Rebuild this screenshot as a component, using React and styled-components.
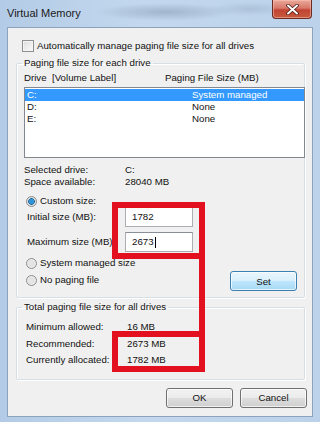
import React from 'react';
import styled, { createGlobalStyle } from 'styled-components';

const GlobalStyle = createGlobalStyle`
  html, body {
    margin: 0;
    padding: 0;
    background: #bcd3ec;
  }
  * {
    box-sizing: border-box;
  }
`;

const font = `"Liberation Sans", Arial, sans-serif`;

const Window = styled.div`
  position: relative;
  width: 320px;
  height: 422px;
  display: flex;
  flex-direction: column;
  overflow: hidden;
  font-family: ${font};
  font-size: 9.7px;
  color: #111;
  background: linear-gradient(90deg, #b3cbe6 0%, #c3d8ee 45%, #bcd2ea 100%);
`;

const TitleBar = styled.div`
  height: 27px;
  flex: none;
  display: flex;
  justify-content: space-between;
  align-items: flex-start;
  background:
    radial-gradient(ellipse 70px 9px at 165px 12px, rgba(120, 140, 165, 0.45), transparent),
    radial-gradient(ellipse 40px 7px at 250px 9px, rgba(140, 160, 185, 0.35), transparent);
`;

const Title = styled.span`
  padding: 7px 0 0 7px;
  font-size: 11px;
  line-height: 13px;
  color: #1a1a1a;
`;

const CloseButton = styled.div`
  width: 40px;
  height: 19px;
  margin-right: 8px;
  border: 1px solid #6b2a22;
  border-top: none;
  border-radius: 0 0 4px 4px;
  background: linear-gradient(180deg, #e9a999 0%, #d8786a 45%, #c24432 55%, #c65a3e 100%);
  box-shadow: inset 0 0 0 1px rgba(255, 200, 190, 0.5);
  display: flex;
  align-items: center;
  justify-content: center;
`;

const Client = styled.div`
  position: relative;
  flex: 1;
  margin: 0 7px;
  background: #f0f0f0;
  border: 1px solid #8da2bc;
  display: flex;
  flex-direction: column;
`;

const BottomFrame = styled.div`
  height: 5px;
  flex: none;
`;

const CheckRow = styled.label`
  display: flex;
  align-items: center;
  gap: 3px;
  height: 13px;
  margin: 11px 0 0 14px;
  line-height: 13px;
`;

const CheckBox = styled.span`
  width: 12px;
  height: 12px;
  border: 1px solid #8e8f8f;
  background: linear-gradient(135deg, #dcdcdc, #fbfbfb);
  box-shadow: inset 0 0 0 1px #f4f4f4;
`;

const Group = styled.fieldset`
  margin: ${p => p.$top}px 7px 0 8px;
  padding: 0 0 ${p => p.$bottom}px 7px;
  border: 1px solid #d5dfe5;
  border-radius: 2px;
  box-shadow: inset 1px 1px 0 #fff, 1px 1px 0 #fff;
  display: flex;
  flex-direction: column;
  min-width: 0;
`;

const Legend = styled.legend`
  margin-left: -2px;
  padding: 0 2px;
  line-height: 12px;
  height: 12px;
`;

const Row = styled.div`
  display: flex;
  align-items: center;
  height: ${p => p.$h || 12}px;
  margin-top: ${p => p.$mt || 0}px;
  padding-left: ${p => p.$indent || 0}px;
  line-height: 12px;
`;

const Label = styled.span`
  width: ${p => p.$w}px;
  flex: none;
  white-space: pre;
`;

const ListBox = styled.div`
  height: 71px;
  margin-top: 3px;
  margin-right: -1px;
  background: #fff;
  border: 1px solid #828790;
  padding-top: 1px;
`;

const ListRow = styled.div`
  display: flex;
  height: 12px;
  line-height: 12px;
  padding-left: 2px;
  background: ${p => (p.$selected ? '#3399ff' : 'transparent')};
  color: ${p => (p.$selected ? '#fff' : '#111')};
`;

const Radio = styled.span`
  width: 11px;
  height: 11px;
  flex: none;
  margin-right: 3px;
  border-radius: 50%;
  border: 1px solid #8b8b8b;
  background: ${p =>
    p.$checked
      ? 'radial-gradient(circle, #2f95d8 0 2.5px, #1a5e8c 3px, #d9dde1 3.5px, #f4f4f4 100%)'
      : 'radial-gradient(circle, #e4e4e4 0 3px, #f0f0f0 5px, #fcfcfc 100%)'};
`;

const Input = styled.div`
  width: 68px;
  height: 20px;
  border: 1px solid #abadb3;
  border-top-color: #8a8e96;
  background: #fff;
  padding-left: 6px;
  display: flex;
  align-items: center;
`;

const Caret = styled.span`
  width: 1px;
  height: 11px;
  margin-left: 1px;
  background: #000;
`;

const InputRows = styled.div`
  display: flex;
  flex-direction: column;
  gap: 5px;
`;

const BottomArea = styled.div`
  display: flex;
  justify-content: space-between;
  align-items: flex-start;
  margin-top: 5px;
  padding-right: 7px;
`;

const RadioColumn = styled.div`
  display: flex;
  flex-direction: column;
  gap: 5px;
`;

const Button = styled.button`
  width: 67px;
  height: 20px;
  margin-top: ${p => p.$mt || 0}px;
  padding: 0;
  font-family: ${font};
  font-size: 9.7px;
  color: #111;
  border-radius: 3px;
  border: 1px solid ${p => (p.$focused ? '#3c7fb1' : '#707070')};
  background: ${p =>
    p.$focused
      ? 'linear-gradient(180deg, #eaf6fd 0%, #d9f0fc 50%, #bee6fd 51%, #a7d9f5 100%)'
      : 'linear-gradient(180deg, #f2f2f2 0%, #ebebeb 50%, #dddddd 51%, #cfcfcf 100%)'};
  box-shadow: inset 0 0 0 1px rgba(255, 255, 255, 0.7);
`;

const ButtonBar = styled.div`
  display: flex;
  justify-content: flex-end;
  gap: 7px;
  margin: 8px 5px 0 0;
`;

const Mark = styled.div`
  position: absolute;
  left: ${p => p.$x}px;
  top: ${p => p.$y}px;
  width: ${p => p.$w}px;
  height: ${p => p.$h}px;
  border: ${p => (p.$line ? 'none' : '6px solid #e3101f')};
  background: ${p => (p.$line ? '#e3101f' : 'transparent')};
  pointer-events: none;
`;

const drives = [
  { name: 'C:', size: 'System managed', selected: true },
  { name: 'D:', size: 'None' },
  { name: 'E:', size: 'None' },
];

const totals = [
  ['Minimum allowed:', '16 MB'],
  ['Recommended:', '2673 MB'],
  ['Currently allocated:', '1782 MB'],
];

export default function App() {
  return (
    <>
      <GlobalStyle />
      <Window>
        <TitleBar>
          <Title>Virtual Memory</Title>
          <CloseButton>
            <svg width="13" height="11" viewBox="0 0 13 11">
              <path d="M2 1.5 L11 9.5 M11 1.5 L2 9.5" stroke="#4a1610" strokeWidth="3.6" strokeLinecap="round" />
              <path d="M2 1.5 L11 9.5 M11 1.5 L2 9.5" stroke="#fff" strokeWidth="2" strokeLinecap="round" />
            </svg>
          </CloseButton>
        </TitleBar>

        <Client>
          <CheckRow>
            <CheckBox />
            Automatically manage paging file size for all drives
          </CheckRow>

          <Group $top={5} $bottom={6}>
            <Legend>Paging file size for each drive</Legend>
            <Row $mt={3}>
              <Label $w={141}>{'Drive  [Volume Label]'}</Label>
              <span>Paging File Size (MB)</span>
            </Row>
            <ListBox>
              {drives.map(d => (
                <ListRow key={d.name} $selected={d.selected}>
                  <Label $w={165}>{d.name}</Label>
                  <span>{d.size}</span>
                </ListRow>
              ))}
            </ListBox>
            <Row $mt={6}>
              <Label $w={101}>Selected drive:</Label>
              <span>C:</span>
            </Row>
            <Row>
              <Label $w={101}>Space available:</Label>
              <span>28040 MB</span>
            </Row>
            <Row $mt={7} $indent={2}>
              <Radio $checked />
              Custom size:
            </Row>
            <InputRows>
              <Row $h={20} $indent={3}>
                <Label $w={98}>Initial size (MB):</Label>
                <Input>1782</Input>
              </Row>
              <Row $h={20} $indent={3}>
                <Label $w={98}>Maximum size (MB)</Label>
                <Input>
                  2673
                  <Caret />
                </Input>
              </Row>
            </InputRows>
            <BottomArea>
              <RadioColumn>
                <Row $indent={2}>
                  <Radio />
                  System managed size
                </Row>
                <Row $indent={2}>
                  <Radio />
                  No paging file
                </Row>
              </RadioColumn>
              <Button $focused $mt={14}>Set</Button>
            </BottomArea>
          </Group>

          <Group $top={3} $bottom={10}>
            <Legend>Total paging file size for all drives</Legend>
            {totals.map(([label, value], i) => (
              <Row key={label} $h={16.5} $mt={i === 0 ? 6 : 0} $indent={2}>
                <Label $w={101}>{label}</Label>
                <span>{value}</span>
              </Row>
            ))}
          </Group>

          <ButtonBar>
            <Button>OK</Button>
            <Button>Cancel</Button>
          </ButtonBar>
        </Client>
        <BottomFrame />

        <Mark $x={112} $y={202} $w={93} $h={57} />
        <Mark $line $x={199} $y={258} $w={6} $h={74} />
        <Mark $x={112} $y={331} $w={93} $h={41} />
      </Window>
    </>
  );
}
